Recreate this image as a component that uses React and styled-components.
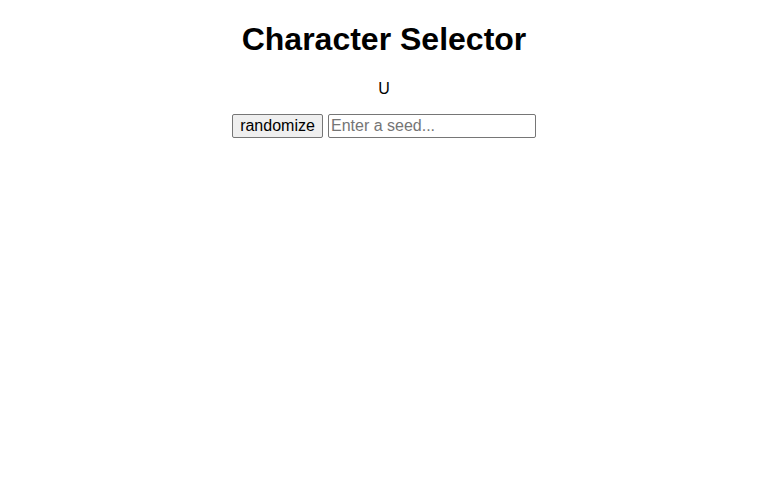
import React, { useState } from 'react';
import styled, { createGlobalStyle } from 'styled-components';

const GlobalStyle = createGlobalStyle`
  body {
    margin: 0;
    background: #ffffff;
    color: #000000;
    font-family: "Liberation Sans", Arial, sans-serif;
  }
`

const Page = styled.div`
  text-align: center;
  padding: 0 8px;
`

const Title = styled.h1`
  font-size: 32px;
  font-weight: 700;
  margin: 21.44px 0;
`

const Letter = styled.p`
  font-size: 16px;
  margin: 16px 0;
`

const Controls = styled.div`
  display: flex;
  justify-content: center;
  align-items: center;
  gap: 5px;
  margin: 16px 0;
`

const Button = styled.button`
  font-family: "Liberation Sans", Arial, sans-serif;
  font-size: 16px;
  height: 24px;
  width: 91px;
  padding: 0 6px;
  background: #efefef;
  color: #000;
  border: 1px solid #767676;
  border-radius: 2px;
  cursor: pointer;
`

const SeedInput = styled.input`
  font-family: "Liberation Sans", Arial, sans-serif;
  font-size: 16px;
  height: 24px;
  width: 208px;
  box-sizing: border-box;
  padding: 1px 2px;
  border: 1px solid #767676;
  border-radius: 2px;

  &::placeholder {
    color: #757575;
  }
`

const letters = 'ABCDEFGHIJKLMNOPQRSTUVWXYZ'

const App = () => {
  const [letter, setLetter] = useState('U')
  const [seed, setSeed] = useState('')

  const randomize = () => {
    setLetter(letters[Math.floor(Math.random() * letters.length)])
  }

  return (
    <Page>
      <GlobalStyle />
      <Title>Character Selector</Title>
      <Letter>{letter}</Letter>
      <Controls>
        <Button onClick={randomize}>randomize</Button>
        <SeedInput
          placeholder="Enter a seed..."
          value={seed}
          onChange={e => setSeed(e.target.value)}
        />
      </Controls>
    </Page>
  );
}

export default App;
